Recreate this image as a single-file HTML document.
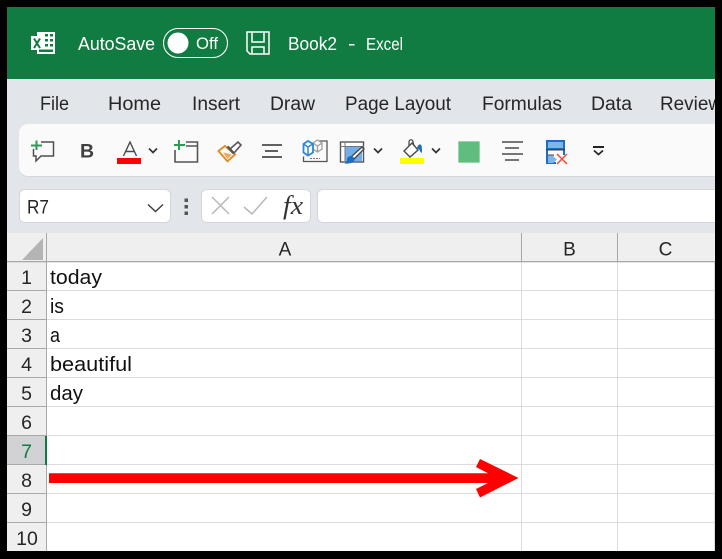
<!DOCTYPE html>
<html><head><meta charset="utf-8"><style>
html,body{margin:0;padding:0;background:#000;width:722px;height:559px;overflow:hidden}
svg{display:block}
text{font-family:"Liberation Sans",sans-serif}
</style></head><body>
<svg width="722" height="559" viewBox="0 0 722 559" xmlns="http://www.w3.org/2000/svg">
<defs><clipPath id="c"><rect x="7" y="7" width="708" height="544"/></clipPath></defs>
<rect width="722" height="559" fill="#000"/>
<g clip-path="url(#c)">
<rect x="7" y="7" width="708" height="72" fill="#107c41"/>
<rect x="7" y="79" width="708" height="154" fill="#e2e5ea"/>
<rect x="7" y="233" width="708" height="318" fill="#fff"/>

<!-- title bar -->
<path d="M37 32h18v22h-18v-4h-6v-14h6z" fill="#fff"/>
<g fill="#107c41">
<rect x="45" y="34" width="3" height="2.500"/><rect x="50" y="34" width="3" height="2.500"/>
<rect x="45" y="39" width="3" height="2.500"/><rect x="50" y="39" width="3" height="2.500"/>
<rect x="45" y="44" width="3" height="2.500"/><rect x="50" y="44" width="3" height="2.500"/>
<rect x="39" y="49.500" width="14" height="2.500"/>
</g>
<path d="M34 38.500l6 9.500M40 38.500l-6 9.500" stroke="#107c41" stroke-width="2" fill="none"/>
<text x="78" y="50" font-size="18" fill="#fff" textLength="77" lengthAdjust="spacingAndGlyphs">AutoSave</text>
<rect x="163.500" y="28.500" width="64" height="29" rx="14.500" fill="none" stroke="#fff" stroke-width="1.100"/>
<circle cx="178" cy="43" r="10.500" fill="#fff"/>
<text x="196" y="49" font-size="16.500" fill="#fff" textLength="22" lengthAdjust="spacingAndGlyphs">Off</text>
<path d="M247 32h22v22h-19l-3-3zM252 32v10h12v-10M252 54v-7h12v7" fill="none" stroke="#fff" stroke-width="1.500"/>
<text x="288" y="50" font-size="18" fill="#fff" textLength="49" lengthAdjust="spacingAndGlyphs">Book2</text>
<rect x="349" y="44" width="5.500" height="1.500" fill="#fff"/>
<text x="366" y="50" font-size="17.500" fill="#fff" textLength="37" lengthAdjust="spacingAndGlyphs">Excel</text>

<!-- menu -->
<g font-size="19" fill="#262626">
<text x="40" y="110" textLength="29" lengthAdjust="spacingAndGlyphs">File</text>
<text x="108" y="110" textLength="53" lengthAdjust="spacingAndGlyphs">Home</text>
<text x="192" y="110" textLength="48" lengthAdjust="spacingAndGlyphs">Insert</text>
<text x="270" y="110" textLength="45" lengthAdjust="spacingAndGlyphs">Draw</text>
<text x="345" y="110" textLength="106" lengthAdjust="spacingAndGlyphs">Page Layout</text>
<text x="482" y="110" textLength="80" lengthAdjust="spacingAndGlyphs">Formulas</text>
<text x="591" y="110" textLength="41" lengthAdjust="spacingAndGlyphs">Data</text>
<text x="660" y="110" textLength="62" lengthAdjust="spacingAndGlyphs">Review</text>
</g>

<!-- toolbar card -->
<rect x="19" y="125" width="720" height="52" rx="9" fill="#d4d6da"/>
<rect x="19" y="124" width="720" height="52" rx="9" fill="#fafafa"/>

<!-- comment icon -->
<path d="M41 142H53.500V156H41L36 161V156H33.500V149" fill="none" stroke="#505050" stroke-width="1.500"/>
<path d="M31 145.500h11M36.500 140.500v9.500" stroke="#2e9a55" stroke-width="2" fill="none"/>
<!-- B -->
<text x="80" y="157.500" font-size="19.500" font-weight="bold" fill="#404040">B</text>
<!-- A -->
<path d="M123.500 156L130 142l6.500 14M125.500 151.500h9" fill="none" stroke="#4a4a4a" stroke-width="1.400"/>
<rect x="117" y="158" width="24" height="6" fill="#f00"/>
<path d="M149 148.500l4 4 4-4" fill="none" stroke="#333" stroke-width="1.700"/>
<!-- insert sheet icon -->
<path d="M175 150v12h22.500V142H186M186 146h11" fill="none" stroke="#555" stroke-width="1.600"/>
<path d="M174 145h11M179 140v10" stroke="#2e9a55" stroke-width="2" fill="none"/>
<!-- brush -->
<path d="M218.500 151L225 146l10 8.500-7.500 6.800z" fill="#fff" stroke="#e08a26" stroke-width="1.900"/>
<path d="M223 152.500l9 2-4.500 4.500z" fill="#eda65a"/>
<path d="M230 149l8-7 3 3-7 8" fill="#fff" stroke="#555" stroke-width="1.600"/>
<path d="M227.500 146.500l6.500 7" stroke="#555" stroke-width="2.400" fill="none"/>
<!-- align -->
<path d="M262 145h20M265 151h13M262 157h20" stroke="#4a4a4a" stroke-width="1.700" fill="none"/>
<!-- 3d icon -->
<path d="M316 141h11v20.500h-23.500v-5" stroke="#555" stroke-width="1.300" fill="none"/>
<path d="M313 143l4.500-3 4.500 3v6l-4.500 3-4.500-3zM313 143l4.500 3 4.500-3M317.500 146v6" stroke="#a0a0a0" stroke-width="1.300" fill="#fafafa"/>
<path d="M303.500 144l4.500-3 5 3v8.500l-5 3-4.500-3z" fill="#fff" stroke="#2f86d6" stroke-width="1.800"/>
<path d="M303.500 144l4.500 3 5-3M308 147v8" stroke="#2f86d6" stroke-width="1.500" fill="none"/>
<path d="M310 158.500h10" stroke="#777" stroke-width="1.100" stroke-dasharray="2 1" fill="none"/>
<!-- borders paint -->
<rect x="340.500" y="142" width="23" height="20" fill="#fff" stroke="#555" stroke-width="1.400"/>
<rect x="345.500" y="147" width="16.500" height="14.500" fill="#73aeea"/>
<path d="M340 146.500h24M345 142v20" stroke="#777" stroke-width="1" fill="none"/>
<path d="M351 157l11-10 2 2-10 10z" fill="#fff" stroke="#444" stroke-width="1.300"/>
<path d="M350 156c3 0 5 2 4.500 4-1 3-6 4-10 3.500 2-1 2.500-2.500 2.500-4 0-2 2-3.500 3.500-3.500z" fill="#1a6fbe"/>
<path d="M374 148.500l4 4 4-4" fill="none" stroke="#333" stroke-width="1.700"/>
<!-- fill color -->
<path d="M404 151l8-8 6 7-8 7z" fill="#fff" stroke="#4a4a4a" stroke-width="1.400"/>
<path d="M409 146v-4c0-3 4-3 4 0l1 4" fill="none" stroke="#4a4a4a" stroke-width="1.300"/>
<path d="M417 149c0-3 2-5 3.500-4.500 1.500.5 1.500 4 1.500 8.500l-1.500-1-1.500-3z" fill="#1a6fbe"/>
<rect x="400" y="158" width="24" height="6" fill="#ff0"/>
<path d="M432 148.500l4 4 4-4" fill="none" stroke="#333" stroke-width="1.700"/>
<!-- green square -->
<rect x="458.500" y="141.500" width="21" height="21" fill="#60bd80" stroke="#8ed0a4" stroke-width="1" stroke-dasharray="2 1"/>
<!-- center align -->
<path d="M502 142h21M505 148h14M502 154h21M505 160h14" stroke="#4a4a4a" stroke-width="1.600" fill="none"/>
<!-- delete cells -->
<rect x="547" y="141" width="17" height="8" fill="#7fb5ea" stroke="#1a6fbe" stroke-width="2"/>
<path d="M547 141v22h9M564 149v6" fill="none" stroke="#1a6fbe" stroke-width="2"/>
<rect x="546" y="149" width="19" height="1.500" fill="#444"/>
<rect x="548" y="154.500" width="6" height="1.300" fill="#555"/>
<path d="M548 156h5l4 3.500-4 3.500h-5z" fill="#7fb5ea"/>
<path d="M557 154l10 10M567 154l-10 10" stroke="#f04a3a" stroke-width="1.500" fill="none"/>
<!-- overflow -->
<rect x="593" y="146" width="11" height="2" fill="#222"/>
<path d="M594 150.500l4.500 4 4.500-4" fill="none" stroke="#222" stroke-width="1.700"/>

<!-- formula row -->
<rect x="19.500" y="189.500" width="151" height="33" rx="5" fill="#fff" stroke="#d4d6da"/>
<text x="27" y="213.500" font-size="19" fill="#262626" textLength="22" lengthAdjust="spacingAndGlyphs">R7</text>
<path d="M148 204.500l7.500 7 7.500-7" fill="none" stroke="#404040" stroke-width="1.500"/>
<rect x="184.500" y="198.500" width="3.500" height="3.500" fill="#555"/>
<rect x="184.500" y="205" width="3.500" height="3.500" fill="#555"/>
<rect x="184.500" y="211.500" width="3.500" height="3.500" fill="#555"/>
<rect x="201.500" y="189.500" width="109" height="33" rx="5" fill="#fff" stroke="#d4d6da"/>
<path d="M212 197l17 17M229 197l-17 17" stroke="#b8b8b8" stroke-width="1.500" fill="none"/>
<path d="M244 207l8 7 15-17" stroke="#b8b8b8" stroke-width="1.500" fill="none"/>
<text x="283" y="214" font-size="26" font-style="italic" style="font-family:'Liberation Serif',serif" fill="#333" textLength="20" lengthAdjust="spacingAndGlyphs">fx</text>
<rect x="317.500" y="189.500" width="420" height="33" rx="5" fill="#fff" stroke="#d4d6da"/>

<!-- headers -->
<rect x="7" y="233" width="708" height="28" fill="#efefef"/>
<rect x="7" y="261" width="39" height="291" fill="#efefef"/>
<rect x="7" y="436" width="39" height="28" fill="#d0d2d4"/>
<path d="M43 238v22h-21z" fill="#b4b4b4"/>
<!-- gridlines -->
<g fill="#dcdcdc">
<rect x="46" y="290" width="670" height="1"/><rect x="46" y="319" width="670" height="1"/>
<rect x="46" y="348" width="670" height="1"/><rect x="46" y="377" width="670" height="1"/>
<rect x="46" y="406" width="670" height="1"/><rect x="46" y="435" width="670" height="1"/>
<rect x="46" y="464" width="670" height="1"/><rect x="46" y="493" width="670" height="1"/>
<rect x="46" y="522" width="670" height="1"/>
<rect x="521" y="262" width="1" height="289"/><rect x="617" y="262" width="1" height="289"/>
<rect x="714" y="262" width="1" height="289"/>
</g>
<g fill="#a8a8a8">
<rect x="7" y="261" width="708" height="1.300"/>
<rect x="46" y="233" width="1" height="318"/>
<rect x="521" y="233" width="1" height="28"/><rect x="617" y="233" width="1" height="28"/>
<rect x="7" y="290" width="39" height="1"/><rect x="7" y="319" width="39" height="1"/>
<rect x="7" y="348" width="39" height="1"/><rect x="7" y="377" width="39" height="1"/>
<rect x="7" y="406" width="39" height="1"/><rect x="7" y="435" width="39" height="1"/>
<rect x="7" y="464" width="39" height="1"/><rect x="7" y="493" width="39" height="1"/>
<rect x="7" y="522" width="39" height="1"/>
</g>
<rect x="45" y="436" width="2" height="29" fill="#107c41"/>

<!-- col labels -->
<g font-size="19" fill="#262626" text-anchor="middle">
<text x="285" y="255.500">A</text><text x="569.500" y="255.500">B</text><text x="665.500" y="255.500">C</text>
</g>
<!-- row labels -->
<g font-size="19.500" fill="#262626" text-anchor="middle">
<text x="26.500" y="284">1</text><text x="26.500" y="313">2</text><text x="26.500" y="342">3</text>
<text x="26.500" y="371">4</text><text x="26.500" y="400">5</text><text x="26.500" y="429">6</text>
<text x="26.500" y="458" fill="#107c41">7</text><text x="26.500" y="487">8</text><text x="26.500" y="516">9</text>
<text x="27" y="545">10</text>
</g>
<!-- cells -->
<g font-size="20" fill="#111">
<text x="50" y="284" textLength="52" lengthAdjust="spacingAndGlyphs">today</text>
<text x="50" y="313" textLength="14" lengthAdjust="spacingAndGlyphs">is</text>
<text x="50" y="342" textLength="10" lengthAdjust="spacingAndGlyphs">a</text>
<text x="50" y="371" textLength="82" lengthAdjust="spacingAndGlyphs">beautiful</text>
<text x="50" y="400" textLength="33" lengthAdjust="spacingAndGlyphs">day</text>
</g>
<!-- arrow -->
<path d="M49 473.300H488L476 467 480 459 518.500 478 480 497.500 476 489 488 483H49z" fill="#f00"/>
</g>
</svg>
</body></html>
